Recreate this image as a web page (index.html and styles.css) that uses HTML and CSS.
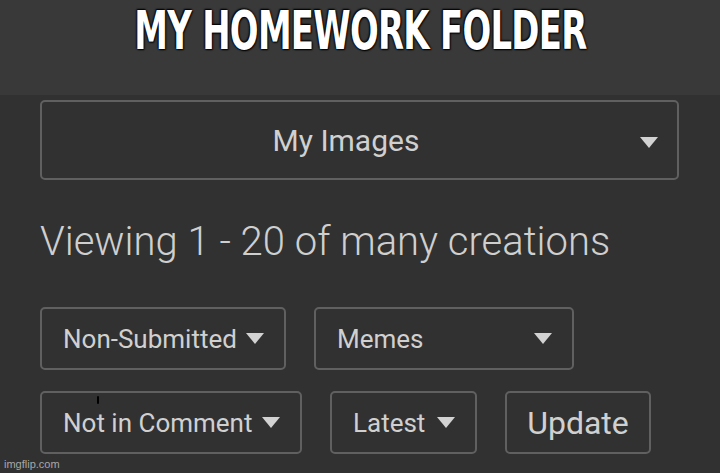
FILE: index.html
```html
<!DOCTYPE html>
<html>
<head>
<meta charset="utf-8">
<link rel="stylesheet" href="styles.css">
</head>
<body>
<header class="banner"><h1 class="title">MY HOMEWORK FOLDER</h1></header>
<main class="panel">
  <div class="select select-main">
    <span class="select-label">My Images</span>
    <svg class="caret" viewBox="0 0 18 11"><path d="M0 0H18L9 11Z"/></svg>
  </div>
  <p class="viewing">Viewing 1 - 20 of many creations</p>
  <div class="row row-one">
    <div class="select w-nonsub"><span>Non-Submitted</span><svg class="caret" viewBox="0 0 18 11"><path d="M0 0H18L9 11Z"/></svg></div>
    <div class="select w-memes"><span>Memes</span><svg class="caret" viewBox="0 0 18 11"><path d="M0 0H18L9 11Z"/></svg></div>
  </div>
  <div class="row row-two">
    <div class="select w-comment"><span>Not in Comment</span><svg class="caret" viewBox="0 0 18 11"><path d="M0 0H18L9 11Z"/></svg><i class="tick"></i></div>
    <div class="select w-latest"><span>Latest</span><svg class="caret" viewBox="0 0 18 11"><path d="M0 0H18L9 11Z"/></svg></div>
    <button class="btn-update">Update</button>
  </div>
</main>
<div class="watermark">imgflip.com</div>
</body>
</html>
```
FILE: styles.css
```css
html, body {
  margin: 0;
  padding: 0;
}
body {
  width: 720px;
  height: 473px;
  background: #313131;
  font-family: Roboto, "Liberation Sans", sans-serif;
  color: #d0d0d0;
  position: relative;
  overflow: hidden;
}
.banner {
  height: 95px;
  background: #393939;
  display: flex;
  justify-content: center;
  align-items: flex-start;
}
.title {
  margin: 0;
  font-family: "DejaVu Sans", sans-serif;
  font-stretch: condensed;
  font-weight: bold;
  font-size: 53px;
  line-height: 62px;
  color: #fff;
  letter-spacing: -1px;
  white-space: nowrap;
  display: inline-block;
  transform: scaleX(0.71);
  text-shadow: 0 0 2px #000, 0 0 2px #000, 1px 1px 2px #000, -1px -1px 2px #000;
}
.panel {
  padding: 5px 41px 0 40px;
}
.select {
  box-sizing: border-box;
  border: 2px solid #606060;
  border-radius: 5px;
  display: flex;
  align-items: center;
  justify-content: space-between;
  padding: 0 20px 0 21px;
  font-size: 26px;
  position: relative;
}
.caret {
  width: 18px;
  height: 11px;
  fill: #d2d2d2;
  flex: none;
}
.select-main {
  height: 80px;
  justify-content: center;
  padding: 0 47px 0 20px;
  font-size: 30px;
}
.select-main .caret {
  position: absolute;
  right: 19px;
  top: 35px;
}
.viewing {
  margin: 41px 0 0;
  font-size: 40px;
  font-weight: 300;
  line-height: 42px;
  color: #cfcfcf;
  white-space: nowrap;
}
.row {
  display: flex;
  gap: 28px;
}
.row-one {
  margin-top: 44px;
}
.row-two {
  margin-top: 21px;
}
.row .select, .btn-update {
  height: 63px;
}
.w-nonsub { width: 246px; }
.w-memes { width: 260px; }
.w-comment { width: 262px; }
.w-latest { width: 147px; }
.btn-update {
  box-sizing: border-box;
  width: 146px;
  border: 2px solid #606060;
  border-radius: 5px;
  background: transparent;
  color: #d0d0d0;
  font-family: Roboto, "Liberation Sans", sans-serif;
  font-size: 32px;
  padding: 0;
}
.tick {
  position: absolute;
  left: 55px;
  top: 3px;
  width: 1.5px;
  height: 8px;
  background: #000;
  border-radius: 1px;
}
.watermark {
  position: absolute;
  left: 4px;
  bottom: 3px;
  font-family: "Liberation Sans", sans-serif;
  font-size: 11px;
  color: #a8a8a8;
}
```
